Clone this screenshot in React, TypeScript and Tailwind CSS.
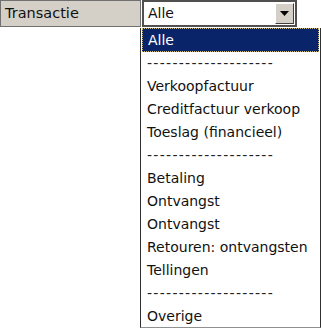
const options = [
  "Alle",
  "--------------------",
  "Verkoopfactuur",
  "Creditfactuur verkoop",
  "Toeslag (financieel)",
  "--------------------",
  "Betaling",
  "Ontvangst",
  "Ontvangst",
  "Retouren: ontvangsten",
  "Tellingen",
  "--------------------",
  "Overige",
];

export default function App() {
  return (
    <div className="w-[321px] h-[328px] bg-white overflow-hidden font-['DejaVu_Sans',sans-serif] text-[14px] text-[#111]">
      {/* filter row */}
      <div className="flex h-[27px]">
        <div className="w-[141px] h-[27px] bg-[#d4d0c8] border border-[#707070] flex items-center pl-[4px] text-[14.5px]">
          Transactie
        </div>
        <div className="ml-[1px] w-[155px] h-[27px] bg-white border-2 border-[#505050] flex items-center justify-between pl-[4px] pr-[1px]">
          <span>Alle</span>
          <div className="w-[19px] h-[21px] bg-[#d4d0c8] border border-t-white border-l-white border-r-[#404040] border-b-[#404040] flex items-center justify-center">
            <svg width="9" height="5" viewBox="0 0 9 5">
              <polygon points="0,0 9,0 4.5,5" fill="#000" />
            </svg>
          </div>
        </div>
      </div>

      {/* open list */}
      <div className="ml-[140px] mt-[1px] w-[181px] h-[300px] border-l border-r border-b border-l-[#303030] border-r-[#303030] border-b-[#909090] bg-white">
        {options.map((opt, i) =>
          i === 0 ? (
            <div
              key={i}
              className="h-[24px] mx-[1px] bg-[#0a246a] text-white border border-dotted border-[#c8b878] flex items-center pl-[5px]"
            >
              {opt}
            </div>
          ) : (
            <div
              key={i}
              className={
                opt.startsWith("-")
                  ? "h-[23px] flex items-center pl-[6px] tracking-[1.3px] text-[#222]"
                  : "h-[23px] flex items-center pl-[6px]"
              }
            >
              {opt}
            </div>
          )
        )}
      </div>
    </div>
  );
}
